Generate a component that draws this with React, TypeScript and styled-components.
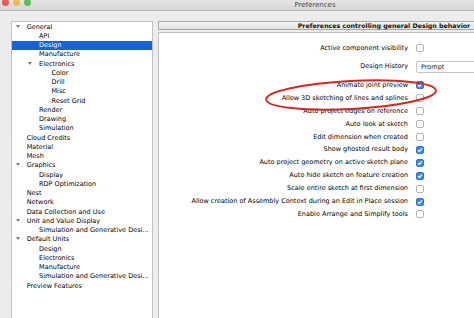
import styled, { createGlobalStyle } from "styled-components";

interface TreeItem {
  label: string;
  level: number;
  open?: boolean;
  selected?: boolean;
}

interface Setting {
  label: string;
  checked?: boolean;
  select?: string;
}

const treeItems: TreeItem[] = [
  { label: "General", level: 0, open: true },
  { label: "API", level: 1 },
  { label: "Design", level: 1, selected: true },
  { label: "Manufacture", level: 1 },
  { label: "Electronics", level: 1, open: true },
  { label: "Color", level: 2 },
  { label: "Drill", level: 2 },
  { label: "Misc", level: 2 },
  { label: "Reset Grid", level: 2 },
  { label: "Render", level: 1 },
  { label: "Drawing", level: 1 },
  { label: "Simulation", level: 1 },
  { label: "Cloud Credits", level: 0 },
  { label: "Material", level: 0 },
  { label: "Mesh", level: 0 },
  { label: "Graphics", level: 0, open: true },
  { label: "Display", level: 1 },
  { label: "RDP Optimization", level: 1 },
  { label: "Nest", level: 0 },
  { label: "Network", level: 0 },
  { label: "Data Collection and Use", level: 0 },
  { label: "Unit and Value Display", level: 0, open: true },
  { label: "Simulation and Generative Desi...", level: 1 },
  { label: "Default Units", level: 0, open: true },
  { label: "Design", level: 1 },
  { label: "Electronics", level: 1 },
  { label: "Manufacture", level: 1 },
  { label: "Simulation and Generative Desi...", level: 1 },
  { label: "Preview Features", level: 0 },
];

const settings: Setting[] = [
  { label: "Active component visibility", checked: false },
  { label: "Design History", select: "Prompt" },
  { label: "Animate joint preview", checked: true },
  { label: "Allow 3D sketching of lines and splines", checked: false },
  { label: "Auto project edges on reference", checked: false },
  { label: "Auto look at sketch", checked: false },
  { label: "Edit dimension when created", checked: false },
  { label: "Show ghosted result body", checked: true },
  { label: "Auto project geometry on active sketch plane", checked: true },
  { label: "Auto hide sketch on feature creation", checked: true },
  { label: "Scale entire sketch at first dimension", checked: false },
  {
    label: "Allow creation of Assembly Context during an Edit in Place session",
    checked: true,
  },
  { label: "Enable Arrange and Simplify tools", checked: false },
];

const App = () => {
  return (
    <>
      <GlobalStyle />
      <StyledWindow>
        <StyledTitleBar>
          <StyledLights>
            <StyledLight $color="#ec5b53" />
            <StyledLight $color="#f3b948" />
            <StyledLight $color="#5bbf4f" />
          </StyledLights>
          <StyledTitle>Preferences</StyledTitle>
          <span />
        </StyledTitleBar>
        <StyledBody>
          <StyledTree>
            {treeItems.map((item, i) => (
              <StyledTreeRow key={i} $level={item.level} $selected={!!item.selected}>
                <StyledToggle>{item.open && <StyledTriangle />}</StyledToggle>
                {item.label}
              </StyledTreeRow>
            ))}
          </StyledTree>
          <StyledSettingsColumn>
            <StyledHeaderBar>Preferences controlling general Design behavior</StyledHeaderBar>
            <StyledContent>
              <StyledGrid>
                {settings.map((s) => (
                  <Row key={s.label} setting={s} />
                ))}
              </StyledGrid>
            </StyledContent>
          </StyledSettingsColumn>
        </StyledBody>
        <StyledAnnotation width="180" height="40" viewBox="0 0 180 40">
          <ellipse
            cx="89"
            cy="20"
            rx="85"
            ry="14"
            transform="rotate(-3 89 20)"
            fill="none"
            stroke="#d8261e"
            strokeWidth="2"
          />
        </StyledAnnotation>
      </StyledWindow>
    </>
  );
};

const Row = ({ setting }: { setting: Setting }) => (
  <>
    <StyledLabel>{setting.label}</StyledLabel>
    {setting.select ? (
      <StyledSelect>{setting.select}</StyledSelect>
    ) : (
      <StyledCheckbox $checked={!!setting.checked}>
        {setting.checked && (
          <svg width="6" height="6" viewBox="0 0 6 6">
            <path d="M1 3.1 L2.4 4.5 L5 1.3" fill="none" stroke="#fff" strokeWidth="1.2" />
          </svg>
        )}
      </StyledCheckbox>
    )}
  </>
);

const GlobalStyle = createGlobalStyle`
  html, body {
    margin: 0;
    padding: 0;
  }
  body {
    background: #ececec;
    overflow: hidden;
    font-family: "DejaVu Sans", "Noto Sans", sans-serif;
  }
`;

const StyledWindow = styled.div`
  position: relative;
  width: 630px;
  height: 318px;
  display: flex;
  flex-direction: column;
  background: #ececec;
  overflow: hidden;
`;

const StyledTitleBar = styled.div`
  height: 10px;
  flex-shrink: 0;
  display: grid;
  grid-template-columns: 1fr auto 1fr;
  background: linear-gradient(#e4e4e4, #d6d6d6);
  border-bottom: 1px solid #b8b8b8;
`;

const StyledLights = styled.div`
  display: flex;
  gap: 4px;
  padding-left: 1.5px;
  margin-top: -1px;
`;

const StyledLight = styled.span<{ $color: string }>`
  width: 7px;
  height: 7px;
  border-radius: 50%;
  background: ${(p) => p.$color};
`;

const StyledTitle = styled.div`
  font-size: 7px;
  line-height: 10px;
  color: #4b4b4b;
`;

const StyledBody = styled.div`
  flex: 1;
  display: flex;
  gap: 5px;
  padding: 10px 12px 0 11px;
  min-height: 0;
`;

const StyledTree = styled.div`
  width: 142px;
  flex-shrink: 0;
  box-sizing: border-box;
  background: #ffffff;
  border: 1px solid #c3c3c3;
  border-bottom: none;
`;

const StyledTreeRow = styled.div<{ $level: number; $selected: boolean }>`
  height: 9.26px;
  display: flex;
  align-items: center;
  padding-left: ${(p) => 3 + p.$level * 12.4}px;
  background: ${(p) => (p.$selected ? "#1762d6" : "transparent")};
  color: ${(p) => (p.$selected ? "#ffffff" : "#000000")};
  font-size: 6.5px;
  white-space: nowrap;
  overflow: hidden;
`;

const StyledToggle = styled.span`
  width: 11.7px;
  flex-shrink: 0;
  display: flex;
  align-items: center;
`;

const StyledTriangle = styled.span`
  margin: -1px 0 0 1px;
  width: 0;
  height: 0;
  border-left: 2.2px solid transparent;
  border-right: 2.2px solid transparent;
  border-top: 3.4px solid #7c7c7c;
`;

const StyledSettingsColumn = styled.div`
  flex: 1;
  display: flex;
  flex-direction: column;
  gap: 2px;
`;

const StyledHeaderBar = styled.div`
  height: 9px;
  box-sizing: border-box;
  border: 1px solid #a9a9a9;
  background: linear-gradient(#f3f3f3, #e2e2e2);
  padding-right: 8px;
  font-size: 6.3px;
  font-weight: bold;
  line-height: 7px;
  text-align: center;
  color: #111111;
  white-space: nowrap;
`;

const StyledContent = styled.div`
  flex: 1;
  background: #ffffff;
  border: 1px solid #c0c0c0;
  border-bottom: none;
  padding-top: 9px;
`;

const StyledGrid = styled.div`
  display: grid;
  grid-template-columns: 249px auto;
  column-gap: 8px;
  align-items: center;
`;

const StyledLabel = styled.div`
  font-size: 6.5px;
  line-height: 12.9px;
  text-align: right;
  color: #000000;
  white-space: nowrap;
`;

const StyledCheckbox = styled.div<{ $checked: boolean }>`
  width: 8px;
  height: 8px;
  box-sizing: border-box;
  border-radius: 2px;
  border: 1px solid ${(p) => (p.$checked ? "#2f72de" : "#b4b4b4")};
  background: ${(p) => (p.$checked ? "#3a86f6" : "#ffffff")};
  display: flex;
  align-items: center;
  justify-content: center;
`;

const StyledSelect = styled.div`
  width: 110px;
  height: 12px;
  margin: 6px 0;
  box-sizing: border-box;
  border: 1px solid #c6c6c6;
  border-radius: 2px;
  background: #ffffff;
  font-size: 6.5px;
  line-height: 10px;
  padding-left: 4px;
  color: #1a1a1a;
`;

const StyledAnnotation = styled.svg`
  position: absolute;
  left: 262px;
  top: 75px;
  pointer-events: none;
`;

export default App;
